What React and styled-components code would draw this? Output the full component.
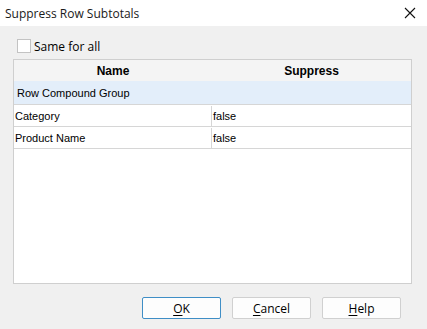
import React from "react";
import styled, { createGlobalStyle } from "styled-components";

const GlobalStyle = createGlobalStyle`
  html, body {
    margin: 0;
    padding: 0;
    background: #f0f0f0;
  }
  body {
    font-family: "Open Sans", "Noto Sans", sans-serif;
  }
`;

const Dialog = styled.div`
  width: 427px;
  height: 329px;
  display: flex;
  flex-direction: column;
  background: #f0f0f0;
  overflow: hidden;
`;

const TitleBar = styled.div`
  height: 26px;
  flex: none;
  background: #ffffff;
  display: flex;
  align-items: center;
  justify-content: space-between;
  padding: 0 11px 0 5px;
  font-size: 12px;
  color: #1a1a1a;
`;

const Body = styled.div`
  flex: 1;
  display: flex;
  flex-direction: column;
  padding: 13px 15px 11px 13px;
`;

const CheckRow = styled.label`
  display: flex;
  align-items: center;
  gap: 3px;
  margin-left: 4px;
  height: 14px;
  font-size: 12px;
  color: #000;
`;

const Box = styled.span`
  width: 12px;
  height: 12px;
  border: 1px solid #c3c3c3;
  background: #fff;
`;

const Grid = styled.div`
  margin-top: 6px;
  height: 225px;
  box-sizing: border-box;
  border: 1px solid #cfcfcf;
  background: #fff;
  display: flex;
  flex-direction: column;
  font-family: "Liberation Sans", Arial, sans-serif;
  font-size: 11px;
  color: #000;
`;

const HeadRow = styled.div`
  display: grid;
  grid-template-columns: 198px 1fr;
  height: 21px;
  background: #f4f4f4;
`;

const HeadCell = styled.div`
  display: flex;
  align-items: center;
  justify-content: center;
  font-weight: bold;
  font-size: 12px;
`;

const GroupRow = styled.div`
  height: 24px;
  display: flex;
  align-items: center;
  padding-left: 3px;
  padding-top: 1px;
  background: #e3eefa;
  border-bottom: 1px solid #d6d6d6;
  box-sizing: border-box;
`;

const DataRow = styled.div`
  display: grid;
  grid-template-columns: 198px 1fr;
  height: 22px;
  padding-top: 1px;
  border-bottom: 1px solid #d6d6d6;
  box-sizing: border-box;
`;

const Cell = styled.div`
  display: flex;
  align-items: center;
  padding-left: 1px;
  border-right: ${(p) => (p.$last ? "none" : "1px solid #d6d6d6")};
`;

const Footer = styled.div`
  margin-top: 13px;
  display: flex;
  justify-content: flex-end;
  gap: 11px;
  padding-right: 11px;
`;

const Button = styled.div`
  width: 79px;
  height: 22px;
  box-sizing: border-box;
  display: flex;
  align-items: center;
  justify-content: center;
  background: #fdfdfd;
  border: 1px solid ${(p) => (p.$primary ? "#3f8ec6" : "#d0d0d0")};
  border-radius: 2px;
  font-size: 12px;
  color: #000;
  u {
    text-decoration: underline;
    text-underline-offset: 2px;
  }
`;

const rows = [
  { name: "Category", value: "false" },
  { name: "Product Name", value: "false" },
];

export default function App() {
  return (
    <Dialog>
      <GlobalStyle />
      <TitleBar>
        <span>Suppress Row Subtotals</span>
        <svg width="12" height="12" viewBox="0 0 12 12">
          <path d="M1 1 L11 11 M11 1 L1 11" stroke="#111" strokeWidth="1.1" />
        </svg>
      </TitleBar>
      <Body>
        <CheckRow>
          <Box />
          Same for all
        </CheckRow>
        <Grid>
          <HeadRow>
            <HeadCell>Name</HeadCell>
            <HeadCell>Suppress</HeadCell>
          </HeadRow>
          <GroupRow>Row Compound Group</GroupRow>
          {rows.map((r) => (
            <DataRow key={r.name}>
              <Cell>{r.name}</Cell>
              <Cell $last>{r.value}</Cell>
            </DataRow>
          ))}
        </Grid>
        <Footer>
          <Button $primary>
            <u>O</u>K
          </Button>
          <Button>
            <u>C</u>ancel
          </Button>
          <Button>
            <u>H</u>elp
          </Button>
        </Footer>
      </Body>
    </Dialog>
  );
}
